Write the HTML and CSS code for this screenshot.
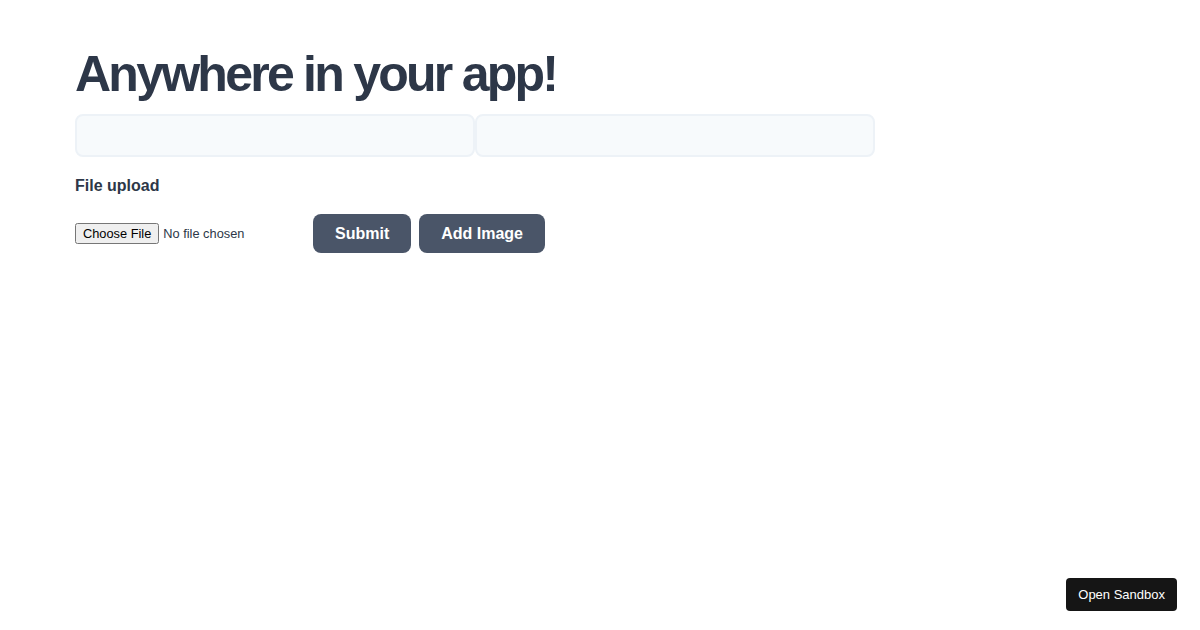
FILE: index.html
```html
<!DOCTYPE html>
<html>
<head>
<meta charset="utf-8">
<link rel="stylesheet" href="styles.css">
</head>
<body>
<main class="page">
  <h1 class="title">Anywhere in your app!</h1>
  <div class="fields">
    <input class="field" type="text">
    <input class="field" type="text">
  </div>
  <label class="label">File upload</label>
  <div class="upload-row">
    <input class="file" type="file">
    <button class="btn">Submit</button>
    <button class="btn">Add Image</button>
  </div>
</main>
<button class="sandbox">Open Sandbox</button>
</body>
</html>
```
FILE: styles.css
```css
html, body {
  margin: 0;
  padding: 0;
  background: #ffffff;
}
body {
  font-family: "Liberation Sans", Arial, sans-serif;
  color: #2d3748;
}
.page {
  padding: 42px 75px 0;
}
.title {
  margin: 0;
  font-size: 50px;
  font-weight: 700;
  letter-spacing: -2.75px;
  line-height: 64px;
  color: #2d3748;
}
.fields {
  display: flex;
  margin-top: 8px;
}
.field {
  box-sizing: border-box;
  width: 400px;
  height: 43px;
  margin: 0;
  background: #f7fafc;
  border: 2px solid #edf2f7;
  border-radius: 8px;
  outline: none;
}
.label {
  display: block;
  margin-top: 20px;
  font-size: 16px;
  font-weight: 700;
  line-height: 18px;
}
.upload-row {
  display: flex;
  align-items: center;
  margin-top: 19px;
}
.file {
  width: 230px;
  font-family: "Liberation Sans", Arial, sans-serif;
  font-size: 12.8px;
  color: #2d3748;
}
.btn {
  margin-left: 8px;
  height: 39px;
  padding: 0 22px;
  border: none;
  border-radius: 8px;
  background: #4a5568;
  color: #ffffff;
  font-family: "Liberation Sans", Arial, sans-serif;
  font-size: 16px;
  font-weight: 700;
}
.sandbox {
  position: fixed;
  right: 23px;
  bottom: 19px;
  height: 33px;
  padding: 0 12px;
  border: none;
  border-radius: 4px;
  background: #151515;
  color: #ffffff;
  font-family: "Liberation Sans", Arial, sans-serif;
  font-size: 13px;
}
```
